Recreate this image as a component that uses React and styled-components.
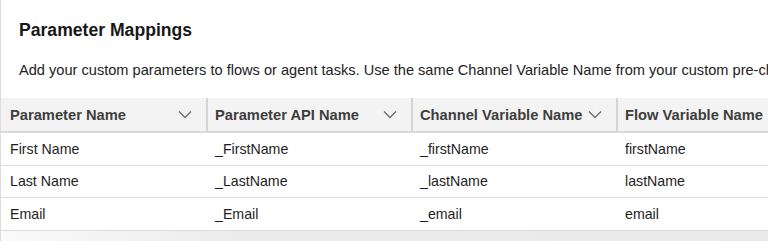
import styled, { createGlobalStyle } from "styled-components";

const GlobalStyle = createGlobalStyle`
  html, body {
    margin: 0;
    padding: 0;
    background: #fff;
  }
  body {
    font-family: "Liberation Sans", Arial, sans-serif;
    color: #181818;
  }
`;

const Card = styled.div`
  width: 768px;
  height: 241px;
  overflow: hidden;
  border-left: 1px solid #dcdcdc;
  box-sizing: border-box;
  display: flex;
  flex-direction: column;
`;

const Title = styled.h2`
  margin: 0;
  padding: 19px 0 0 18px;
  font-size: 17.6px;
  font-weight: 700;
  line-height: 22px;
  color: #181818;
  white-space: nowrap;
`;

const Description = styled.p`
  margin: 0;
  padding: 19px 0 0 18px;
  font-size: 14.6px;
  line-height: 20px;
  color: #222;
  white-space: nowrap;
`;

const Table = styled.div`
  margin-top: 18px;
  display: grid;
  grid-template-columns: 205px 205px 205px 205px;
`;

const HeaderCell = styled.div`
  height: 35px;
  background: #f3f3f3;
  border-bottom: 2px solid #dadada;
  box-sizing: border-box;
  display: flex;
  align-items: center;
  justify-content: space-between;
  padding: 0 14px 0 9px;
  position: relative;
  font-size: 14.7px;
  font-weight: 700;
  color: #3e3e3e;
  white-space: nowrap;

  &:not(:first-child)::before {
    content: "";
    position: absolute;
    left: 0;
    top: 0;
    bottom: 0;
    width: 1.5px;
    background: #d4d4d4;
  }
`;

const Cell = styled.div`
  height: 32.5px;
  border-bottom: 1px solid #dcdcdc;
  box-sizing: border-box;
  display: flex;
  align-items: center;
  padding-left: 9px;
  font-size: 14.2px;
  color: #1e1e1e;
  white-space: nowrap;
  background: #fff;
`;

const Footer = styled.div`
  flex: 1;
  background: linear-gradient(90deg, #fafafa 0%, #ececec 30%, #e9e9e9 100%);
`;

const Chevron = () => (
  <svg width="14" height="9" viewBox="0 0 14 9" fill="none">
    <path d="M1 1.5 L7 7.5 L13 1.5" stroke="#6b6b6b" strokeWidth="1.3" />
  </svg>
);

const columns = [
  { label: "Parameter Name", sort: true },
  { label: "Parameter API Name", sort: true },
  { label: "Channel Variable Name", sort: true },
  { label: "Flow Variable Name", sort: false },
];

const rows = [
  ["First Name", "_FirstName", "_firstName", "firstName"],
  ["Last Name", "_LastName", "_lastName", "lastName"],
  ["Email", "_Email", "_email", "email"],
];

export default function App() {
  return (
    <>
      <GlobalStyle />
      <Card>
        <Title>Parameter Mappings</Title>
        <Description>
          Add your custom parameters to flows or agent tasks. Use the same
          Channel Variable Name from your custom pre-chat form.
        </Description>
        <Table>
          {columns.map((col) => (
            <HeaderCell key={col.label}>
              <span>{col.label}</span>
              {col.sort && <Chevron />}
            </HeaderCell>
          ))}
          {rows.map((row) =>
            row.map((value, i) => (
              <Cell key={row[0] + i}>{value}</Cell>
            ))
          )}
        </Table>
        <Footer />
      </Card>
    </>
  );
}
